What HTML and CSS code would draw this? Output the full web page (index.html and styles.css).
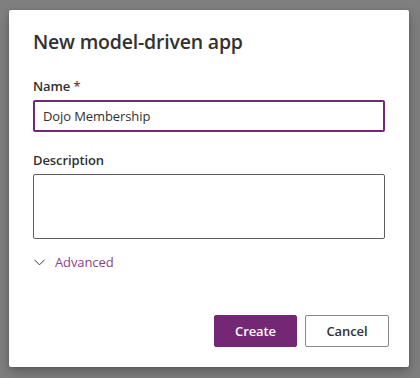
FILE: index.html
```html
<!DOCTYPE html>
<html>
<head>
<meta charset="utf-8">
<link rel="stylesheet" href="styles.css">
</head>
<body>
<div class="dialog">
  <h1 class="title">New model-driven app</h1>
  <div class="field">
    <label class="label">Name <span class="req">*</span></label>
    <div class="input focused">Dojo Membership</div>
  </div>
  <div class="field">
    <label class="label">Description</label>
    <div class="textarea"></div>
  </div>
  <div class="advanced">
    <svg class="chev" width="11" height="7" viewBox="0 0 11 7"><path d="M0.5 0.8 L5.5 5.8 L10.5 0.8" fill="none" stroke="#323130" stroke-width="1"/></svg>
    <span class="adv-text">Advanced</span>
  </div>
  <div class="footer">
    <button class="btn primary">Create</button>
    <button class="btn">Cancel</button>
  </div>
</div>
</body>
</html>
```
FILE: styles.css
```css
html, body {
  margin: 0;
  padding: 0;
  background: #7f7f7f;
  width: 420px;
  height: 378px;
  overflow: hidden;
  font-family: "Open Sans", "Noto Sans", sans-serif;
  color: #323130;
}
.dialog {
  box-sizing: border-box;
  margin: 10px 0 0 9px;
  width: 400px;
  height: 357px;
  background: #fff;
  border-radius: 2px;
  box-shadow: 0 6px 14px rgba(0,0,0,0.22), 0 1px 4px rgba(0,0,0,0.18);
  padding: 19px 24px 20px 24px;
  display: flex;
  flex-direction: column;
}
.title {
  margin: 0;
  font-size: 19.5px;
  font-weight: 600;
  line-height: 26px;
  letter-spacing: -0.2px;
}
.field {
  display: flex;
  flex-direction: column;
}
.field:first-of-type { margin-top: 21px; }
.label {
  font-size: 13px;
  font-weight: 600;
  line-height: 20px;
  padding: 0 0 4px 0;
  letter-spacing: -0.1px;
}
.req { color: #a4262c; }
.input {
  box-sizing: border-box;
  height: 32px;
  border: 2px solid #742774;
  border-radius: 2px;
  padding: 0 8px;
  font-size: 13px;
  line-height: 28px;
  letter-spacing: -0.1px;
}
.field + .field { margin-top: 18px; }
.textarea {
  box-sizing: border-box;
  height: 65px;
  border: 1px solid #605e5c;
  border-radius: 2px;
}
.advanced {
  margin-top: 13px;
  display: flex;
  align-items: center;
  height: 20px;
}
.chev { margin-left: 1px; margin-right: 10px; }
.adv-text {
  color: #8d3f8d;
  font-size: 13px;
  line-height: 20px;
  letter-spacing: -0.1px;
}
.footer {
  margin-top: auto;
  margin-right: -4px;
  display: flex;
  justify-content: flex-end;
  gap: 8px;
}
.btn {
  box-sizing: border-box;
  height: 32px;
  width: 84px;
  border: 1px solid #8a8886;
  border-radius: 2px;
  background: #fff;
  color: #323130;
  font-family: "Open Sans", "Noto Sans", sans-serif;
  font-size: 13px;
  font-weight: 600;
  padding: 0;
  letter-spacing: -0.1px;
}
.btn.primary {
  width: 83px;
  background: #742774;
  border-color: #742774;
  color: #fff;
}
```
